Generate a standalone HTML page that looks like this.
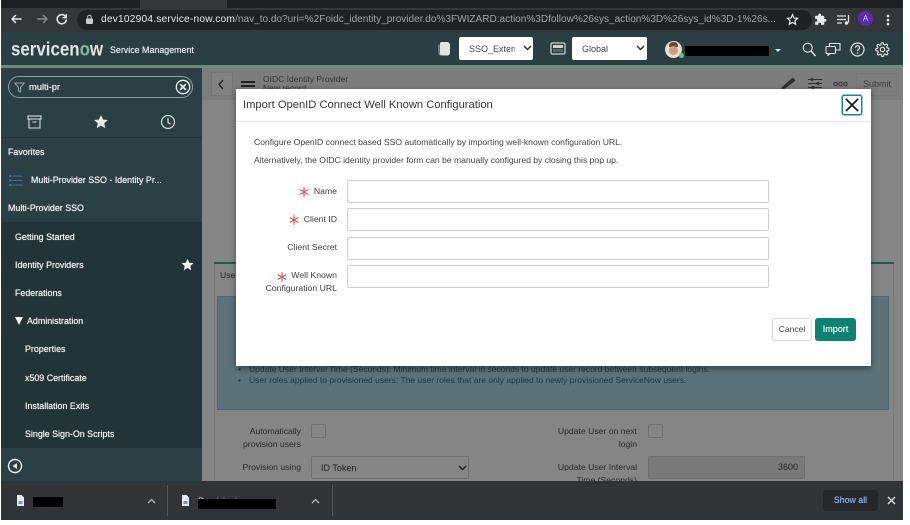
<!DOCTYPE html>
<html><head><meta charset="utf-8">
<style>
html,body{margin:0;padding:0;background:#fff}
#p{position:relative;width:910px;height:525px;overflow:hidden;background:#fff;font-family:"Liberation Sans",sans-serif;filter:blur(.35px)}
#p div,#p span.a,#p svg{position:absolute}
.t{white-space:nowrap;line-height:14px}
.n{color:#f0f4f4;font-size:8.900px;text-shadow:0 0 .6px #f0f4f4}
.l{color:#3d3d3d;font-size:8.700px;text-align:right;white-space:nowrap;line-height:13px}
.g{color:#2a2a2a;font-size:8.650px;text-align:right;white-space:nowrap;line-height:13px}
.i{background:#fff;border:1px solid #cfcfcf;border-radius:2px;box-sizing:border-box}
.b{background:#000}
</style></head><body><div id="p">
<div style="left:1px;top:0;width:902px;height:520px;background:#858585"></div>

<!-- tab strip -->
<div style="left:1px;top:0;width:902px;height:8px;background:#1f2023"></div>
<div style="left:140px;top:0;width:87px;height:9px;background:#35363a"></div>
<!-- toolbar -->
<div style="left:1px;top:8px;width:902px;height:24px;background:#35363a"></div>
<svg style="left:8px;top:11px" width="62" height="16" viewBox="0 0 62 16" fill="none" stroke-linecap="round" stroke-linejoin="round">
<path d="M13 8H4M7.500 4.500L4 8l3.500 3.500" stroke="#e8eaed" stroke-width="1.500"/>
<path d="M30 8h9M35.500 4.500L39 8l-3.500 3.500" stroke="#8b8d91" stroke-width="1.500"/>
<path d="M57.500 5.500A4.600 4.600 0 1 0 58.300 9" stroke="#e8eaed" stroke-width="1.500"/><path d="M58.300 3.500v3.200h-3.200" stroke="#e8eaed" stroke-width="1.300"/>
</svg>
<div style="left:77px;top:10px;width:735px;height:20px;border-radius:10px;background:#202124"></div>
<svg style="left:85px;top:14px" width="9" height="11" viewBox="0 0 9 11"><rect x="1" y="4.500" width="7" height="5.500" rx="1" fill="#c8cacd"/><path d="M2.700 4.500V3a1.800 1.800 0 0 1 3.600 0v1.500" stroke="#c8cacd" fill="none"/></svg>
<div class="t" style="left:101px;top:12.500px;font-size:10.200px;color:#e8eaed;letter-spacing:.2px">dev102904.service-now.com<span style="color:#a3a6aa;font-size:10.050px;letter-spacing:0">/nav_to.do?uri=%2Foidc_identity_provider.do%3FWIZARD:action%3Dfollow%26sys_action%3D%26sys_id%3D-1%26s...</span></div>
<svg style="left:786px;top:13px" width="13" height="13" viewBox="0 0 24 24"><path d="M12 3l2.700 6.200 6.800.6-5.100 4.500 1.500 6.600L12 17.400 6.100 20.900l1.500-6.600L2.500 9.800l6.800-.6z" fill="none" stroke="#e8eaed" stroke-width="2.200"/></svg>
<svg style="left:814px;top:13px" width="13" height="13" viewBox="0 0 24 24"><path d="M20.500 11H19V7a2 2 0 0 0-2-2h-4V3.500a2.500 2.500 0 0 0-5 0V5H4a2 2 0 0 0-2 2v3.800h1.500a2.700 2.700 0 0 1 0 5.400H2V20a2 2 0 0 0 2 2h3.800v-1.500a2.700 2.700 0 0 1 5.400 0V22H17a2 2 0 0 0 2-2v-4h1.500a2.500 2.500 0 0 0 0-5z" fill="#e8eaed"/></svg>
<svg style="left:836px;top:13px" width="14" height="13" viewBox="0 0 14 13" fill="none" stroke="#dfe1e5" stroke-width="1.300"><path d="M1 3h9M1 6.500h9M1 10h5"/><path d="M12.500 2v7.500"/><circle cx="10.500" cy="10" r="1.800" fill="#dfe1e5" stroke="none"/></svg>
<div style="left:858px;top:11px;width:15px;height:15px;border-radius:50%;background:#5b2bb0;color:#e5dcf7;font-size:8px;line-height:15px;text-align:center">A</div>
<svg style="left:886px;top:14px" width="4" height="12" viewBox="0 0 4 12" fill="#e8eaed"><circle cx="2" cy="2" r="1.300"/><circle cx="2" cy="6" r="1.300"/><circle cx="2" cy="10" r="1.300"/></svg>

<!-- SN header -->
<div style="left:1px;top:32px;width:902px;height:33px;background:#2a3f43"></div>
<div style="left:1px;top:65px;width:902px;height:3px;background:#6e8d7f"></div>
<div class="t" style="left:11px;top:37.500px;font-size:16.900px;line-height:20px;font-weight:bold;color:#dfe5e5;transform:scaleY(1.15);transform-origin:left top">servicen<span style="color:#83bb98">o</span>w</div>
<div class="t" style="left:110px;top:43px;font-size:8.900px;color:#e4eaea;text-shadow:0 0 .5px #e4eaea">Service Management</div>
<svg style="left:438px;top:41px" width="13" height="15" viewBox="0 0 13 15"><path d="M3 1h7l2 2v10l-2 1.500H4L2 13V2z" fill="#dfe5e5"/><path d="M1 3.500v9l2 2" stroke="#9fb0b0" fill="none"/></svg>
<div style="left:459px;top:37px;width:74px;height:23px;background:#fff;border-radius:2px"></div>
<div class="t" style="left:469px;top:42px;font-size:9px;color:#444;width:46px;overflow:hidden">SSO_Extern.</div>
<svg style="left:523px;top:45px" width="9" height="6" viewBox="0 0 9 6"><path d="M1 1l3.500 3.500L8 1" fill="none" stroke="#333" stroke-width="1.500"/></svg>
<svg style="left:550px;top:42px" width="16" height="13" viewBox="0 0 16 13"><rect x="1" y="1" width="14" height="11" rx="1.500" fill="none" stroke="#c9d2d2" stroke-width="1.300"/><rect x="3" y="3" width="10" height="3" fill="#c9d2d2"/><rect x="3" y="7" width="10" height="3" fill="#51666a"/></svg>
<div style="left:572px;top:37px;width:75px;height:23px;background:#fff;border-radius:2px"></div>
<div class="t" style="left:582px;top:42px;font-size:9px;color:#444">Global</div>
<svg style="left:636px;top:45px" width="9" height="6" viewBox="0 0 9 6"><path d="M1 1l3.500 3.500L8 1" fill="none" stroke="#333" stroke-width="1.500"/></svg>
<div style="left:665px;top:41px;width:17px;height:17px;border-radius:50%;background:#e9dccb;overflow:hidden"><div style="left:4px;top:1px;width:9px;height:5px;background:#6b4a30;border-radius:4px 4px 0 0"></div><div style="left:4px;top:5px;width:9px;height:9px;background:#d19a78;border-radius:50%"></div></div>
<div style="left:679px;top:53px;width:5px;height:5px;border-radius:50%;background:#62c08a"></div>
<div class="b" style="left:685px;top:46px;width:84px;height:10px"></div>
<div style="left:775px;top:49px;width:0;height:0;border-left:3px solid transparent;border-right:3px solid transparent;border-top:3px solid #d8dfdf"></div>
<svg style="left:802px;top:42px" width="14" height="15" viewBox="0 0 14 15" fill="none" stroke="#dfe5e5" stroke-width="1.100"><circle cx="5.700" cy="5.700" r="4.500"/><path d="M9 9l4.500 5" stroke-width="1.500"/></svg>
<svg style="left:825px;top:42px" width="16" height="14" viewBox="0 0 16 14" fill="none" stroke="#dfe5e5" stroke-width="1.100"><rect x="1" y="4.500" width="9.500" height="7" rx="1"/><path d="M4.500 4.500V1.500h10.500v6.500h-4.500M3 11.500v2l2-2"/></svg>
<svg style="left:850px;top:42px" width="15" height="15" viewBox="0 0 15 15"><circle cx="7.500" cy="7.500" r="6.500" fill="none" stroke="#dfe5e5" stroke-width="1.200"/><path d="M5.500 5.800a2 2 0 1 1 3 1.700c-.7.400-1 .8-1 1.600" fill="none" stroke="#dfe5e5" stroke-width="1.200"/><circle cx="7.500" cy="11" r=".8" fill="#dfe5e5"/></svg>
<svg style="left:875px;top:42px" width="15" height="15" viewBox="0 0 24 24" fill="none" stroke="#dfe5e5" stroke-width="1.800"><circle cx="12" cy="12" r="3.500"/><path d="M19.400 15a1.600 1.600 0 0 0 .3 1.800l.1.100a2 2 0 1 1-2.800 2.800l-.1-.1a1.600 1.600 0 0 0-2.700 1.100V21a2 2 0 1 1-4 0v-.1a1.600 1.600 0 0 0-2.700-1.100l-.1.100a2 2 0 1 1-2.800-2.800l.1-.1a1.600 1.600 0 0 0-1.100-2.700H3a2 2 0 1 1 0-4h.1a1.600 1.600 0 0 0 1.100-2.700l-.1-.1a2 2 0 1 1 2.800-2.800l.1.100a1.600 1.600 0 0 0 2.700-1.100V3a2 2 0 1 1 4 0v.1a1.600 1.600 0 0 0 2.700 1.100l.1-.1a2 2 0 1 1 2.800 2.800l-.1.100a1.600 1.600 0 0 0 1.100 2.700h.1a2 2 0 1 1 0 4h-.1a1.600 1.600 0 0 0-1.500 1z"/></svg>

<!-- sidebar -->
<div style="left:1px;top:68px;width:201px;height:413px;background:#2b4045"></div>
<div style="left:1px;top:222px;width:201px;height:226px;background:#233438"></div>
<div style="left:8px;top:76px;width:185px;height:22px;border:1px solid #8ea1a3;border-radius:12px;box-sizing:border-box"></div>
<svg style="left:14px;top:82px" width="11" height="11" viewBox="0 0 11 11"><path d="M.8 1h9.400L6.500 5.500V10L4.500 9V5.500z" fill="none" stroke="#93a5a7"/></svg>
<div class="t n" style="left:29px;top:80px;font-size:9.300px">multi-pr</div>
<svg style="left:175px;top:79px" width="16" height="16" viewBox="0 0 16 16" fill="none" stroke="#e8eded"><circle cx="8" cy="8" r="6.700" stroke-width="1.300"/><path d="M5.200 5.200l5.600 5.600M10.800 5.200l-5.600 5.600" stroke-width="1.800"/></svg>
<svg style="left:27px;top:115px" width="15" height="14" viewBox="0 0 15 14" fill="none" stroke="#d3dbdb" stroke-width="1.100"><rect x="1" y="1" width="13" height="3"/><path d="M2 4v9h11V4M5.500 7h4"/></svg>
<svg style="left:93px;top:114px" width="16" height="15" viewBox="0 0 24 24"><path d="M12 1.500l3.300 7.200 7.700.8-5.800 5.200 1.700 7.800L12 18.500 5.100 22.500l1.700-7.800L1 9.500l7.700-.8z" fill="#e4eaea"/></svg>
<svg style="left:160px;top:114px" width="16" height="16" viewBox="0 0 16 16" fill="none" stroke="#d3dbdb" stroke-width="1.200"><circle cx="8" cy="8" r="6.500"/><path d="M8 4v4.300l2.500 2"/></svg>
<div style="left:1px;top:137px;width:201px;height:1px;background:#243539"></div>
<div class="t n" style="left:8px;top:145px">Favorites</div>
<svg style="left:9px;top:174px" width="14" height="13" viewBox="0 0 14 13" fill="#3c6f9c"><rect x="0" y="1" width="2.500" height="2"/><rect x="0" y="5.500" width="2.500" height="2"/><rect x="0" y="10" width="2.500" height="2"/><rect x="3.500" y="1.500" width="10" height="1"/><rect x="3.500" y="6" width="10" height="1"/><rect x="3.500" y="10.500" width="10" height="1"/></svg>
<div class="t n" style="left:31px;top:173px">Multi-Provider SSO - Identity Pr...</div>
<div class="t n" style="left:8px;top:201px">Multi-Provider SSO</div>
<div class="t n" style="left:15px;top:230px">Getting Started</div>
<div class="t n" style="left:15px;top:258px">Identity Providers</div>
<svg style="left:181px;top:258px" width="13" height="13" viewBox="0 0 24 24"><path d="M12 1.500l3.300 7.200 7.700.8-5.800 5.200 1.700 7.800L12 18.500 5.100 22.500l1.700-7.800L1 9.500l7.700-.8z" fill="#f2f4f4"/></svg>
<div class="t n" style="left:15px;top:286px">Federations</div>
<div style="left:15px;top:317px;width:0;height:0;border-left:4.500px solid transparent;border-right:4.500px solid transparent;border-top:8px solid #f0f3f3"></div>
<div class="t n" style="left:27px;top:314px">Administration</div>
<div class="t n" style="left:25px;top:342px">Properties</div>
<div class="t n" style="left:25px;top:371px">x509 Certificate</div>
<div class="t n" style="left:25px;top:399px">Installation Exits</div>
<div class="t n" style="left:25px;top:427px">Single Sign-On Scripts</div>
<svg style="left:7px;top:458px" width="16" height="16" viewBox="0 0 16 16"><circle cx="8" cy="8" r="6.500" fill="none" stroke="#e8eded" stroke-width="1.400"/><path d="M10 5v6L5.500 8z" fill="#e8eded"/></svg>

<!-- content behind -->
<div style="left:202px;top:68px;width:701px;height:32px;background:#7d7d7d"></div>
<div style="left:211px;top:72px;width:22px;height:24px;background:#828282;border:1px solid #777;box-sizing:border-box"></div>
<svg style="left:217px;top:79px" width="8" height="11" viewBox="0 0 8 11"><path d="M6 1L2 5.500 6 10" fill="none" stroke="#222" stroke-width="1.400"/></svg>
<div style="left:241px;top:81px;width:14px;height:2px;background:#222;box-shadow:0 4px 0 #222,0 8px 0 #222"></div>
<div class="t" style="left:263px;top:72px;font-size:8.500px;color:#333">OIDC Identity Provider</div>
<div class="t" style="left:263px;top:81px;font-size:8.500px;color:#333">New record</div>
<svg style="left:780px;top:77px" width="18" height="14" viewBox="0 0 18 14"><path d="M3 13L1 11 12 1c1.200-.6 3.500 1.500 3 3z" fill="#2f2f2f"/></svg>
<svg style="left:808px;top:77px" width="14" height="13" viewBox="0 0 14 13" fill="#2f2f2f"><rect y="2" width="14" height="1"/><rect y="6" width="14" height="1"/><rect y="10" width="14" height="1"/><circle cx="4" cy="2.500" r="1.500"/><circle cx="10" cy="6.500" r="1.500"/><circle cx="5" cy="10.500" r="1.500"/></svg>
<svg style="left:833px;top:81px" width="15" height="6" viewBox="0 0 15 6" fill="none" stroke="#2f2f2f"><circle cx="2.500" cy="3" r="1.800"/><circle cx="7.500" cy="3" r="1.800"/><circle cx="12.500" cy="3" r="1.800"/></svg>
<div style="left:856px;top:73px;width:42px;height:23px;border:1px solid #777;border-radius:2px;box-sizing:border-box;color:#3c3c3c;font-size:9px;line-height:21px;text-align:center">Submit</div>
<div style="left:214px;top:262px;width:680px;height:2px;background:#1e5c52"></div>
<div style="left:214px;top:264px;width:680px;height:226px;border-left:1px solid #777;border-right:1px solid #777;box-sizing:border-box"></div>
<div class="t g" style="left:220px;top:269px">User</div>
<div style="left:217px;top:296px;width:672px;height:114px;background:#5b7378;border:1px solid #4f6a6e;box-sizing:border-box"></div>
<div class="t" style="left:238px;top:362px;font-size:8.500px;color:#22393d"><span style="display:inline-block;width:11px">•</span>Update User Interval Time (Seconds): Minimum time interval in seconds to update user record between subsequent logins.</div>
<div class="t" style="left:238px;top:373px;font-size:8.500px;color:#22393d"><span style="display:inline-block;width:11px">•</span>User roles applied to provisioned users: The user roles that are only applied to newly provisioned ServiceNow users.</div>

<div class="g" style="left:221px;top:425px;width:80px">Automatically<br>provision users</div>
<div style="left:311px;top:424px;width:15px;height:14px;border:1px solid #6f6f6f;border-radius:2px;box-sizing:border-box"></div>
<div class="g" style="left:221px;top:461px;width:80px">Provision using</div>
<div style="left:311px;top:456px;width:158px;height:23px;border:1px solid #6f6f6f;border-radius:2px;box-sizing:border-box"></div>
<div class="t" style="left:321px;top:461px;font-size:9px;color:#222">ID Token</div>
<svg style="left:458px;top:465px" width="9" height="6" viewBox="0 0 9 6"><path d="M1 1l3.500 3.500L8 1" fill="none" stroke="#222" stroke-width="1.500"/></svg>
<div class="g" style="left:537px;top:425px;width:100px">Update User on next<br>login</div>
<div style="left:648px;top:424px;width:15px;height:14px;border:1px solid #6f6f6f;border-radius:2px;box-sizing:border-box"></div>
<div class="g" style="left:537px;top:461px;width:100px">Update User Interval<br>Time (Seconds)</div>
<div style="left:648px;top:456px;width:157px;height:23px;background:#797979;border:1px solid #6f6f6f;border-radius:2px;box-sizing:border-box;color:#2a2a2a;font-size:9px;line-height:21px;text-align:right;padding-right:6px">3600</div>

<!-- modal -->
<div style="left:236px;top:89px;width:635px;height:277px;background:#fff;box-shadow:0 2px 6px rgba(0,0,0,.45)"></div>
<div style="left:236px;top:121px;width:635px;height:1px;background:#e6e6e6"></div>
<div class="t" style="left:243px;top:98px;font-size:11.200px;color:#333">Import OpenID Connect Well Known Configuration</div>
<div style="left:842px;top:95px;width:20px;height:20px;border:1px solid #1f8a7c;border-radius:2px;box-sizing:border-box;box-shadow:0 0 0 .5px #1f8a7c"></div>
<svg style="left:845px;top:98px" width="14" height="14" viewBox="0 0 14 14"><path d="M1 1l12 12M13 1L1 13" stroke="#1b1b1b" stroke-width="1.800"/></svg>
<div class="t" style="left:254px;top:135px;font-size:8.600px;color:#3f3f3f">Configure OpenID connect based SSO automatically by importing well-known configuration URL.</div>
<div class="t" style="left:254px;top:153px;font-size:8.600px;color:#3f3f3f">Alternatively, the OIDC identity provider form can be manually configured by closing this pop up.</div>

<div class="l" style="left:237px;top:185px;width:100px">Name</div>
<svg style="left:299px;top:187px" width="10" height="10" viewBox="0 0 10 10"><path d="M5 0v10M.7 2.500l8.600 5M9.300 2.500l-8.600 5" stroke="#d9534f" stroke-width="1.100"/></svg>
<div class="i" style="left:347px;top:180px;width:422px;height:23px"></div>
<div class="l" style="left:237px;top:213px;width:100px">Client ID</div>
<svg style="left:289px;top:215px" width="10" height="10" viewBox="0 0 10 10"><path d="M5 0v10M.7 2.500l8.600 5M9.300 2.500l-8.600 5" stroke="#d9534f" stroke-width="1.100"/></svg>
<div class="i" style="left:347px;top:208px;width:422px;height:23px"></div>
<div class="l" style="left:237px;top:241px;width:100px">Client Secret</div>
<div class="i" style="left:347px;top:237px;width:422px;height:23px"></div>
<div class="l" style="left:237px;top:269px;width:100px">Well Known<br>Configuration URL</div>
<svg style="left:277px;top:272px" width="10" height="10" viewBox="0 0 10 10"><path d="M5 0v10M.7 2.500l8.600 5M9.300 2.500l-8.600 5" stroke="#d9534f" stroke-width="1.100"/></svg>
<div class="i" style="left:347px;top:265px;width:422px;height:23px"></div>

<div style="left:772px;top:318px;width:40px;height:23px;background:#fff;border:1px solid #d6d6d6;border-radius:3px;box-sizing:border-box;color:#3c3c3c;font-size:8.500px;line-height:21px;text-align:center">Cancel</div>
<div style="left:815px;top:318px;width:41px;height:23px;background:#0e8271;border-radius:3px;color:#eef8f6;font-size:9px;text-shadow:0 0 .5px #eef8f6;line-height:23px;text-align:center">Import</div>

<!-- download bar -->
<div style="left:1px;top:481px;width:902px;height:39px;background:#333437"></div>
<svg style="left:16px;top:495px" width="9" height="11" viewBox="0 0 9 11"><path d="M1 0h4.500L8 2.500V11H1z" fill="#e8eaed"/><rect x="2.500" y="6" width="4" height="3" fill="#7f95b5"/></svg>
<div class="b" style="left:33px;top:497px;width:30px;height:10px"></div>
<svg style="left:147px;top:498px" width="9" height="6" viewBox="0 0 9 6"><path d="M1 5l3.500-3.500L8 5" fill="none" stroke="#b5b7ba" stroke-width="1.300"/></svg>
<div style="left:167px;top:485px;width:1px;height:31px;background:#55565a"></div>
<svg style="left:181px;top:495px" width="9" height="11" viewBox="0 0 9 11"><path d="M1 0h4.500L8 2.500V11H1z" fill="#e8eaed"/><rect x="2.500" y="6" width="4" height="3" fill="#7f95b5"/></svg>
<div class="t" style="left:198px;top:494px;font-size:9px;color:#c9cbce">Provisioning</div>
<div class="b" style="left:198px;top:499px;width:78px;height:10px"></div>
<svg style="left:311px;top:498px" width="9" height="6" viewBox="0 0 9 6"><path d="M1 5l3.500-3.500L8 5" fill="none" stroke="#b5b7ba" stroke-width="1.300"/></svg>
<div style="left:332px;top:485px;width:1px;height:31px;background:#55565a"></div>
<div style="left:823px;top:490px;width:55px;height:21px;background:#26272a;border-radius:3px;color:#8ab4f8;font-size:8.800px;text-shadow:0 0 .4px #8ab4f8;line-height:21px;text-align:center">Show all</div>
<svg style="left:887px;top:496px" width="9" height="9" viewBox="0 0 9 9"><path d="M1 1l7 7M8 1L1 8" stroke="#dfe1e5" stroke-width="1.400"/></svg>
</div></body></html>
